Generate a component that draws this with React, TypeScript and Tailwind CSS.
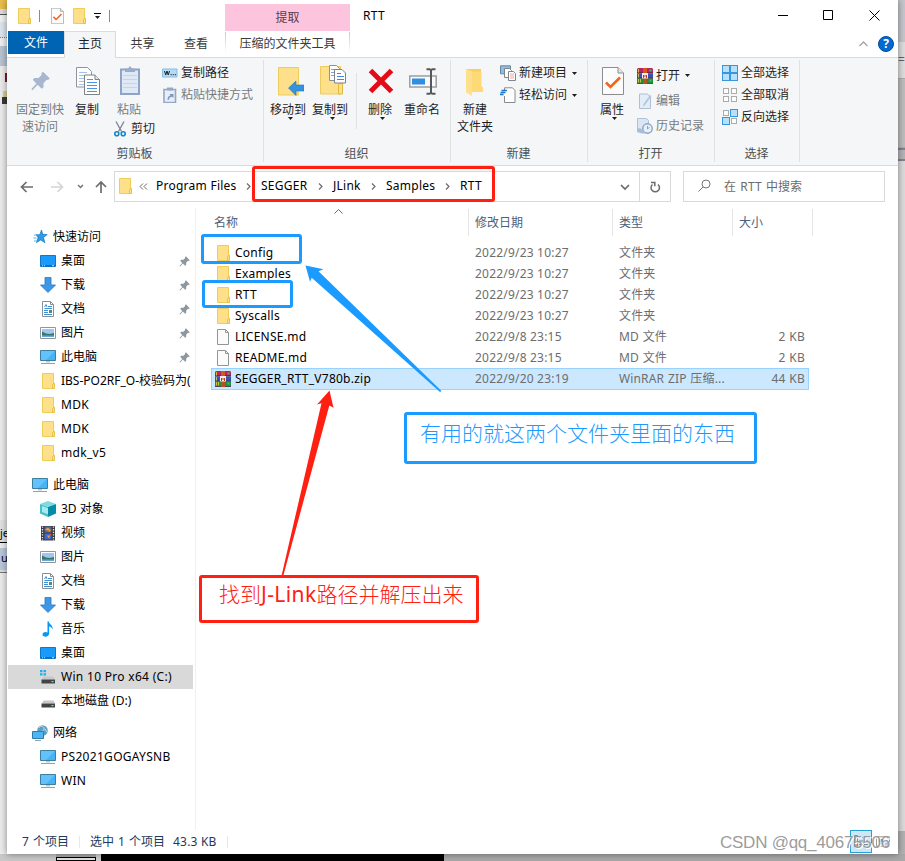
import type { ReactNode } from 'react'

type IconProps = { name: string; className?: string }

// 小图标：资源管理器里用到的各种 16px / 32px 图形
function Icon({ name, className = 'size-4' }: IconProps) {
  switch (name) {
    case 'folder':
      return (
        <svg className={className} viewBox="0 0 16 16">
          <path d="M2.5.5h11v11l.5.5v3.5H2.5z" fill="#ffe08a" stroke="#f0cd58" />
          <path d="M12.5 15.5v-4l2-1.3v5.3z" fill="#ffe08a" stroke="#e3b93b" strokeWidth=".8" />
        </svg>
      )
    case 'file':
      return (
        <svg className={className} viewBox="0 0 16 16">
          <path d="M2.5.5h8l3 3v12h-11z" fill="#fbfbfb" stroke="#949494" />
          <path d="M10.5.5v3h3" fill="none" stroke="#949494" />
        </svg>
      )
    case 'rar':
      return (
        <svg className={className} viewBox="0 0 16 16">
          <path d="M0 1l1-1h14l1 1v4H0z" fill="#b8245f" />
          <path d="M0 5.5h16v4.5H0z" fill="#3551b5" />
          <path d="M0 10.5h16V15H0z" fill="#1e8f3c" />
          <path d="M0 5h16M0 10.2h16M0 15.5h16" stroke="#2b1d2b" strokeWidth=".8" />
          <path d="M1.5 1v3.5M1.5 6v3.5M1.5 11v3.5M3.5 11v3.5" stroke="#ecd34a" strokeWidth=".8" />
          <path d="M6 0h4v5H6z" fill="#d9541d" />
          <path d="M6 10h4v6H6z" fill="#b5521d" />
          <path d="M5 5h6v5.500H5z" fill="#f3efec" />
          <path d="M6.500 10V7M9.500 7v3M8 7v2" fill="none" stroke="#c23a20" strokeWidth="1" />
          <path d="M12.5 1.5h2v2h-2zM12.5 11.5h2v2h-2z" fill="#4dbb57" />
        </svg>
      )
    case 'star':
      return (
        <svg className={className} viewBox="0 0 16 16">
          <path d="M9.5 1l1.2 4.3 4.5.3-3.7 2.8 1.3 5.3-4-2.8-4.3 2.7 1.6-4.9-2-3h3.7z" fill="#2e9be6" stroke="#1676bd" strokeWidth=".7" />
          <path d="M2 6h4M1.5 9h3M2 12h3" stroke="#55b6f0" strokeWidth="1" />
        </svg>
      )
    case 'desktop':
      return (
        <svg className={className} viewBox="0 0 16 16">
          <path d="M.5 2.5h15v11H.5z" fill="#1a9bfc" stroke="#1276c4" />
          <path d="M1 12.2h14v1H1z" fill="#0a5fa8" />
          <path d="M2 12.7h1M4 12.7h1M12 12.7h2" stroke="#fff" strokeWidth=".8" />
        </svg>
      )
    case 'download':
      return (
        <svg className={className} viewBox="0 0 16 16">
          <path d="M5 .5h6V8h4.5L8 15.5.5 8H5z" fill="#3e97e6" stroke="#2a77c2" strokeWidth=".8" />
        </svg>
      )
    case 'doc':
      return (
        <svg className={className} viewBox="0 0 16 16">
          <path d="M2.500.500h8l3 3v12h-11z" fill="#fff" stroke="#8a8f94" />
          <path d="M10.500.500v3h3" fill="none" stroke="#8a8f94" />
          <path d="M4.500 6l1.500-2.500 1 2.500M8 5.500h4M4.500 7.500h7.500M4 9.500h4M4 11.500h4M4 13.500h8" fill="none" stroke="#3f8fd0" />
          <path d="M9 9h3v3H9z" fill="#4b8d85" />
        </svg>
      )
    case 'picture':
      return (
        <svg className={className} viewBox="0 0 16 16">
          <path d="M.5 2.500h15v11H.500z" fill="#fff" stroke="#8f979d" />
          <path d="M2 4h12v8H2z" fill="#9cc9ee" />
          <path d="M2 6.500l4 2 4 .5 4-1V12H2z" fill="#3c7270" />
          <path d="M2 10.500h12V12H2z" fill="#6aa9d6" />
        </svg>
      )
    case 'pc':
      return (
        <svg className={className} viewBox="0 0 16 16">
          <path d="M.5 1.500h15v10H.500z" fill="#46b3f7" stroke="#3d7f9f" />
          <path d="M1 2h14L6 11H1z" fill="#76cbff" opacity=".6" />
          <path d="M6 12h4v1.500H6z" fill="#b9c8d2" />
          <path d="M1 14.500h14" stroke="#8fa5b4" />
        </svg>
      )
    case 'cube':
      return (
        <svg className={className} viewBox="0 0 16 16">
          <path d="M8 0l8 3-8 3-8-3z" fill="#7fdbe3" />
          <path d="M0 3l8 3v10l-8-3.500z" fill="#45c0cc" />
          <path d="M16 3L8 6v10l8-3.500z" fill="#078ca6" />
          <path d="M2 5l6 2.300v6L2 11z" fill="#a6ecee" />
        </svg>
      )
    case 'video':
      return (
        <svg className={className} viewBox="0 0 16 16">
          <path d="M1 1h14v14.500H1z" fill="#3a3a3d" />
          <path d="M2.500 1.500v14M13.500 1.500v14" stroke="#e8e8e8" strokeWidth="1.300" strokeDasharray="1.300 1.300" />
          <path d="M4.500 1.500h7v6h-7z" fill="#4a67b0" />
          <path d="M4.500 8.500h7v6h-7z" fill="#3b6ad0" />
          <path d="M5 4.500l3-2 3 3-2 1.500zM7 10.500h3l-1 3z" fill="#e8a13b" />
          <path d="M5 6h4M9 9.500h2" stroke="#d6482e" />
        </svg>
      )
    case 'music':
      return (
        <svg className={className} viewBox="0 0 16 16">
          <path d="M7.500.5h1.300c.4 3 4.700 4 3.700 8-.6-2-2-2.800-3.400-3V12.500c0 4-6.600 4-6.600 1 0-2.200 2.800-3.200 5-2z" fill="#0a96f5" />
        </svg>
      )
    case 'osdisk':
    case 'disk':
      return (
        <svg className={className} viewBox="0 0 16 16">
          {name === 'osdisk' && <path d="M0 1h2.500v2.300H0zM3.500 1H6v2.300H3.500zM0 4.300h2.500v2.300H0zM3.500 4.300H6v2.300H3.500z" fill="#1ab0ef" />}
          <path d="M3.500 7.500h10l1.500 3H2z" fill="#c6c8ca" />
          <path d="M1.500 10.500H15v4H1.500z" fill="#424548" />
          <path d="M11.500 12h2v1.200h-2z" fill="#5ff07a" />
        </svg>
      )
    case 'network':
      return (
        <svg className={className} viewBox="0 0 16 16">
          <circle cx="10.500" cy="5.500" r="5.300" fill="#5d9fc0" />
          <path d="M7 3c2-3 4-2 5 0s-2 2-1 4M13 4l2 3" fill="none" stroke="#c7e3ee" />
          <path d="M.5 6.500h11v7H.500z" fill="#4cb5f8" stroke="#2f7ca6" />
          <path d="M3 15.500h6" stroke="#8fa5b4" />
        </svg>
      )
    case 'pin':
      return (
        <svg className={className} viewBox="0 0 16 16">
          <path
            d="M10 .5L15.500 6l-1.500 1.200-1-.2-2.600 2.700v3.300l-1.400 1.200-3.300-3.200L1.600 15.300l-.9-.9L4.700 10 1.800 6.900l1.300-1.300h3.300L9 3l-.3-1.200z"
            fill="currentColor"
          />
        </svg>
      )
    case 'checkpage':
      return (
        <svg className={className} viewBox="0 0 22 28">
          <path d="M.5.500h15.500l5.500 5.500v21.500H.5z" fill="#fcfcfc" stroke="#8d8d8d" />
          <path d="M16 .5V6h5.500" fill="#e4e4e4" stroke="#8d8d8d" />
          <path d="M4 15.500l4.500 4.500L18 10.500" fill="none" stroke="#f1641e" strokeWidth="2.600" />
        </svg>
      )
    case 'copy':
      return (
        <svg className={className} viewBox="0 0 24 28">
          <path d="M.5.500h11l4 4V20H.500z" fill="#fdfdfd" stroke="#8e9499" />
          <path d="M3 5.500h8M3 8.500h10M3 11.500h10M3 14.500h10M3 17.500h8" stroke="#9fc3ee" />
          <path d="M8.500 8h10.500l4.500 4.500v15h-15z" fill="#fdfdfd" stroke="#7c8388" />
          <path d="M19 8v4.500h4.500" fill="#e4e4e4" stroke="#7c8388" />
          <path d="M11 12.500h6M11 15.500h10M11 18.500h10M11 21.500h10M11 24.500h10" stroke="#4d92e3" />
        </svg>
      )
    case 'paste':
      return (
        <svg className={className} viewBox="0 0 20 29">
          <path d="M1 3.500h18v24.500H1z" fill="#dfe9f5" stroke="#8fa4c4" strokeWidth="2" />
          <path d="M5 2.500h3L10 0l2 2.500h3V6H5z" fill="#9aacc9" />
          <path d="M3 9.500h14M3 13.500h14M3 17.500h14M3 21.500h14" stroke="#c5d4e8" />
        </svg>
      )
    case 'scissors':
      return (
        <svg className={className} viewBox="0 0 12 16">
          <path d="M2 .5l5.500 10M10 .5l-5.500 10" stroke="#77848e" strokeWidth="1.300" />
          <circle cx="2.800" cy="12.800" r="2" fill="none" stroke="#1585c9" strokeWidth="1.600" />
          <circle cx="9.200" cy="12.800" r="2" fill="none" stroke="#1585c9" strokeWidth="1.600" />
        </svg>
      )
    case 'path':
      return (
        <svg className={className} viewBox="0 0 16 16">
          <path d="M.5 4h14.500v8H.500z" fill="#b5dcf7" stroke="#85bce2" />
          <path d="M2.500 6l1.200 4 1.300-4 1.200 4L7.500 6" fill="none" stroke="#222" />
          <path d="M8.500 9.700h1.200M10.700 9.700h1.200M12.800 9.700H14" stroke="#222" />
        </svg>
      )
    case 'shortcut':
      return (
        <svg className={className} viewBox="0 0 16 16">
          <path d="M2 2.500h11.500v13H2z" fill="#e7eef7" stroke="#93a8c8" strokeWidth="1.600" />
          <path d="M5 .5h6v3H5z" fill="#93a8c8" />
          <path d="M5.500 13c0-3 1-4 3-4.500L7.500 7h4v4l-1.300-1.200C8 10 7 11 6.700 13z" fill="#7f97bd" />
        </svg>
      )
    case 'moveto':
      return (
        <svg className={className} viewBox="0 0 26 30">
          <path d="M.5 1.500h20V29H.500z" fill="#ffe08a" stroke="#edcb5c" />
          <path d="M17 29v-9l4-2v11z" fill="#f9d569" />
          <path d="M10.500 22l7.500-7v4h8v6h-8v4.500z" fill="#3592df" stroke="#2177bd" strokeWidth=".6" />
        </svg>
      )
    case 'copyto':
      return (
        <svg className={className} viewBox="0 0 26 30">
          <path d="M.5 1.500h20V29H.500z" fill="#ffe08a" stroke="#edcb5c" />
          <path d="M18.500 29V19.500l4-2V29z" fill="#ffe08a" stroke="#e0b93f" />
          <path d="M9.500.5h7l3 3v12h-10z" fill="#fdfdfd" stroke="#8d9297" />
          <path d="M11 4.500h5M11 7.500h5M11 10.500h5" stroke="#6fa8e6" />
          <path d="M14.500 4.500h7.500l3.500 3.500v10h-11z" fill="#fdfdfd" stroke="#7d8388" />
          <path d="M17 8.500h4M17 11.500h7M17 14.500h7" stroke="#3f8ae0" />
        </svg>
      )
    case 'delete':
      return (
        <svg className={className} viewBox="0 0 26 26">
          <path d="M2.500 2.500l21 21M23.500 2.500l-21 21" stroke="#e30b17" strokeWidth="5" />
        </svg>
      )
    case 'rename':
      return (
        <svg className={className} viewBox="0 0 28 27">
          <path d="M.8 8h26.400v11H.800z" fill="#fafafa" stroke="#9a9da0" strokeWidth="1.500" />
          <path d="M3 10.500h13v6H3z" fill="#2f8fe3" />
          <path d="M17.500 1.300h3.200l1.300 1 1.300-1h3.200M22 2v23M17.500 25.700h3.200l1.300-1 1.300 1h3.200" fill="none" stroke="#55595c" strokeWidth="2" />
        </svg>
      )
    case 'newfolder':
      return (
        <svg className={className} viewBox="0 0 20 28">
          <path d="M1 1h15v17l2 2v4H6z" fill="#fbcf5f" />
          <path d="M1 1l6 2.500V28l-6-3.500z" fill="#ffe18d" />
          <path d="M7 3.500h9.500v15L18 20v4H7z" fill="#ffd976" />
        </svg>
      )
    case 'newitem':
      return (
        <svg className={className} viewBox="0 0 16 16">
          <path d="M.5.800h10v8H.500z" fill="#86bfe8" stroke="#6c8798" />
          <path d="M4.500 3.500h5l2 2v7h-7z" fill="#fff" stroke="#7e868c" />
          <path d="M8.500 6.500h5l2 2v7h-7z" fill="#fff" stroke="#7e868c" />
          <path d="M10 9h4M10 11h4M10 13h4" stroke="#e39191" strokeWidth=".8" />
        </svg>
      )
    case 'easy':
      return (
        <svg className={className} viewBox="0 0 16 16">
          <path d="M4.500 3V.800h8l2.500 2.700v12H4.500V9" fill="#fff" stroke="#868b90" />
          <path d="M1.500 3.500H7M.5 5.500h5M0 7.500h3.500" stroke="#1b78c9" strokeWidth="1.300" />
        </svg>
      )
    case 'edit':
      return (
        <svg className={className} viewBox="0 0 16 16">
          <path d="M2.500 1h8l3 3v11.500h-11z" fill="#e3edf8" stroke="#aebfd6" />
          <path d="M14.500 3L8 12l-2 1.500.500-2.500 6.500-9z" fill="#b3c5df" />
        </svg>
      )
    case 'history':
      return (
        <svg className={className} viewBox="0 0 16 16">
          <path d="M.5.500h9l2 2V14H.500z" fill="#dbe6f3" stroke="#afc1d9" />
          <circle cx="10.500" cy="10.500" r="4.700" fill="#e9f0f8" stroke="#8ba2c3" strokeWidth="1.400" />
          <path d="M10.500 8v3l2.200-2" fill="none" stroke="#8ba2c3" />
          <path d="M0 10.500c3-1 7 1 8 5-4 .5-8-1-8-5z" fill="#a9bddb" />
        </svg>
      )
    case 'selall':
    case 'selnone':
    case 'selinv': {
      const on = name === 'selall' ? [1, 1, 1, 1] : name === 'selnone' ? [0, 0, 0, 0] : [0, 1, 1, 0]
      return (
        <svg className={className} viewBox="0 0 16 16">
          {on.map((v, i) => {
            const x = (i % 2) * 8
            const y = Math.floor(i / 2) * 8
            return v ? (
              <rect key={i} x={x + 0.5} y={y + 0.5} width="7" height="7" fill="#b9e0fa" stroke="#3796dc" />
            ) : (
              <rect key={i} x={x + 1.5} y={y + 1.5} width="5" height="5" fill="#fdfdfd" stroke="#a9abad" />
            )
          })}
        </svg>
      )
    }
    default:
      return null
  }
}

function DownTri({ className = '' }: { className?: string }) {
  return (
    <svg className={`h-[3px] w-[5px] ${className}`} viewBox="0 0 5 3">
      <path d="M0 0h5L2.500 3z" fill="#1e1e1e" />
    </svg>
  )
}

function BigButton({ icon, size, lines, width, dim, arrow }: { icon: string; size: string; lines: string[]; width: string; dim?: boolean; arrow?: boolean }) {
  return (
    <button className={`flex shrink-0 flex-col items-center ${width} ${dim ? 'text-[#777b80]' : 'text-[#1e1e1e]'}`}>
      <span className="flex h-[34px] items-start justify-center">
        <Icon name={icon} className={size} />
      </span>
      {lines.map((l) => (
        <span key={l} className="h-[17px] leading-[17px] whitespace-nowrap">
          {l}
        </span>
      ))}
      {arrow && <DownTri className="mt-[-1px] ml-[4px]" />}
    </button>
  )
}

function SmallButton({ icon, label, dim, arrow, height = 'h-[22px]' }: { icon: string; label: string; dim?: boolean; arrow?: boolean; height?: string }) {
  return (
    <button className={`flex items-center gap-[3px] whitespace-nowrap ${height} ${dim ? 'text-[#777b80]' : 'text-[#1e1e1e]'}`}>
      <Icon name={icon} className="size-4" />
      <span>{label}</span>
      {arrow && <DownTri className="ml-[2px]" />}
    </button>
  )
}

function Group({ label, width, children }: { label: string; width: string; children: ReactNode }) {
  return (
    <div className={`flex h-full shrink-0 pt-[2px] pb-[3px] ${width}`}>
      <div className="flex min-w-0 flex-1 flex-col">
        <div className="flex flex-1 pt-[7px]">{children}</div>
        <div className="h-[17px] pr-px text-center leading-[17px] text-[#4b4f54]">{label}</div>
      </div>
      <div className="w-px bg-[#dfe1e3]" />
    </div>
  )
}

type NavItem = { icon: string; label: string; pinned?: boolean; selected?: boolean; root?: boolean }

const NAV: NavItem[][] = [
  [
    { icon: 'star', label: '快速访问', root: true },
    { icon: 'desktop', label: '桌面', pinned: true },
    { icon: 'download', label: '下载', pinned: true },
    { icon: 'doc', label: '文档', pinned: true },
    { icon: 'picture', label: '图片', pinned: true },
    { icon: 'pc', label: '此电脑', pinned: true },
    { icon: 'folder', label: 'IBS-PO2RF_O-校验码为(' },
    { icon: 'folder', label: 'MDK' },
    { icon: 'folder', label: 'MDK' },
    { icon: 'folder', label: 'mdk_v5' },
  ],
  [
    { icon: 'pc', label: '此电脑', root: true },
    { icon: 'cube', label: '3D 对象' },
    { icon: 'video', label: '视频' },
    { icon: 'picture', label: '图片' },
    { icon: 'doc', label: '文档' },
    { icon: 'download', label: '下载' },
    { icon: 'music', label: '音乐' },
    { icon: 'desktop', label: '桌面' },
    { icon: 'osdisk', label: 'Win 10 Pro x64 (C:)', selected: true },
    { icon: 'disk', label: '本地磁盘 (D:)' },
  ],
  [
    { icon: 'network', label: '网络', root: true },
    { icon: 'pc', label: 'PS2021GOGAYSNB' },
    { icon: 'pc', label: 'WIN' },
  ],
]

const FILES = [
  { icon: 'folder', name: 'Config', date: '2022/9/23 10:27', type: '文件夹', size: '' },
  { icon: 'folder', name: 'Examples', date: '2022/9/23 10:27', type: '文件夹', size: '' },
  { icon: 'folder', name: 'RTT', date: '2022/9/23 10:27', type: '文件夹', size: '' },
  { icon: 'folder', name: 'Syscalls', date: '2022/9/23 10:27', type: '文件夹', size: '' },
  { icon: 'file', name: 'LICENSE.md', date: '2022/9/8 23:15', type: 'MD 文件', size: '2 KB' },
  { icon: 'file', name: 'README.md', date: '2022/9/8 23:15', type: 'MD 文件', size: '2 KB' },
  { icon: 'rar', name: 'SEGGER_RTT_V780b.zip', date: '2022/9/20 23:19', type: 'WinRAR ZIP 压缩...', size: '44 KB', selected: true },
]

function TitleBar() {
  return (
    <div className="flex h-[31px] shrink-0">
      <div className="flex w-[218px] items-center pl-[9px]">
        <Icon name="folder" />
        <div className="ml-[7px] h-3 w-px bg-[#8c8c8c]" />
        <Icon name="checkpage" className="ml-[11px] h-4 w-[13px]" />
        <Icon name="folder" className="ml-[7px] size-4" />
        <div className="ml-[7px] flex flex-col items-center gap-[2px]">
          <div className="h-px w-[7px] bg-black" />
          <DownTri />
        </div>
        <div className="ml-[8px] h-3 w-px bg-[#8c8c8c]" />
      </div>
      <div className="mt-1 flex h-[27px] w-[125px] items-center justify-center bg-[#fdc4de] text-[#5c3a4a]">提取</div>
      <div className="flex-1 pt-2 pl-[13px] leading-4 tracking-[0.3px] text-black">RTT</div>
      <svg className="mt-[10px] mr-[18px] h-[11px] w-[102px]" viewBox="0 0 102 11" fill="none" stroke="#000">
        <path d="M0 5.500h10" />
        <path d="M45.500.500h9v9h-9z" />
        <path d="M91.500.500l10 10M101.500.500l-10 10" />
      </svg>
    </div>
  )
}

function Tabs() {
  return (
    <div className="flex h-[27px] shrink-0 leading-[23px] text-[#3a3a3a]">
      <div className="w-px border-b border-[#dadbdc]" />
      <div className="w-14 border-b border-[#dadbdc]">
        <div className="h-[23px] bg-[#0064b5] text-center text-white">文件</div>
      </div>
      <div className="w-[52px] border-x border-t border-[#dadbdc] bg-[#f5f6f7] text-center text-[#1e1e1e]">主页</div>
      <div className="w-[53px] border-b border-[#dadbdc] pt-px text-center">共享</div>
      <div className="w-[56px] border-b border-[#dadbdc] pt-px pr-[2px] text-center">查看</div>
      <div className="w-[125px] border-b border-[#dadbdc]">
        <div className="flex h-[22px] justify-between pt-px">
          <div className="w-px bg-linear-to-b from-[#c8c8c8] to-white" />
          <span className="whitespace-nowrap">压缩的文件夹工具</span>
          <div className="w-px bg-linear-to-b from-[#c8c8c8] to-white" />
        </div>
      </div>
      <div className="flex flex-1 items-center justify-end border-b border-[#dadbdc] pr-[4px]">
        <svg className="mr-[10px] h-[6px] w-[9px]" viewBox="0 0 9 6" fill="none" stroke="#a4a4a4" strokeWidth="1.300">
          <path d="M.5 5l4-4 4 4" />
        </svg>
        <div className="flex size-4 items-center justify-center rounded-full border border-[#004b9c] bg-[#0069d2] text-[12px] leading-4 font-bold text-white">?</div>
      </div>
    </div>
  )
}

function Ribbon() {
  return (
    <div className="flex h-[108px] shrink-0 border-b border-[#dadbdc] bg-[#f5f6f7]">
      <Group label="剪贴板" width="w-[257px]">
        <div className="w-px" />
        <div className="flex w-16 flex-col items-center text-[#777b80]">
          <span className="flex h-[34px] items-center text-[#a7b7cf]">
            <Icon name="pin" className="mt-[-6px] h-[20px] w-[21px]" />
          </span>
          <span className="leading-[17px]">固定到快</span>
          <span className="leading-[17px]">速访问</span>
        </div>
        <BigButton icon="copy" size="ml-[2px] h-[28px] w-[24px]" lines={['复制']} width="w-[30px]" />
        <div className="flex w-[60px] flex-col pl-[1px]">
          <BigButton icon="paste" size="ml-[2px] h-[29px] w-[20px] mt-[-1px]" lines={['粘贴']} width="w-[52px]" dim />
          <div className="flex h-[22px] items-center gap-[5px] pl-[11px] text-[#1e1e1e]">
            <Icon name="scissors" className="h-4 w-3" />
            剪切
          </div>
        </div>
        <div className="mt-[-5px]">
          <SmallButton icon="path" label="复制路径" />
          <SmallButton icon="shortcut" label="粘贴快捷方式" dim />
        </div>
      </Group>
      <Group label="组织" width="w-[187px]">
        <BigButton icon="moveto" size="ml-[6px] h-[30px] w-[26px] mt-[-1px]" lines={['移动到']} width="w-[48px]" arrow />
        <BigButton icon="copyto" size="ml-[6px] h-[30px] w-[26px] mt-[-2px]" lines={['复制到']} width="w-[36px]" arrow />
        <div className="mt-[6px] ml-[8px] h-[56px] w-px bg-[#dfe1e3]" />
        <BigButton icon="delete" size="ml-[2px] size-[26px] mt-[1px]" lines={['删除']} width="w-[46px]" arrow />
        <BigButton icon="rename" size="ml-[2px] mt-px h-[27px] w-[28px]" lines={['重命名']} width="w-[38px]" />
      </Group>
      <Group label="新建" width="w-[137px]">
        <BigButton icon="newfolder" size="h-[28px] w-[20px] mt-[1px]" lines={['新建', '文件夹']} width="w-[48px]" />
        <div className="mt-[-5px] ml-[1px]">
          <SmallButton icon="newitem" label="新建项目" arrow />
          <SmallButton icon="easy" label="轻松访问" arrow />
        </div>
      </Group>
      <Group label="打开" width="w-[127px]">
        <BigButton icon="checkpage" size="ml-px h-[28px] w-[22px]" lines={['属性']} width="w-[48px]" arrow />
        <div className="mt-[-4px] ml-[1px]">
          <SmallButton icon="rar" label="打开" arrow height="h-[25px]" />
          <SmallButton icon="edit" label="编辑" dim height="h-[25px]" />
          <SmallButton icon="history" label="历史记录" dim height="h-[25px]" />
        </div>
      </Group>
      <Group label="选择" width="w-[85px]">
        <div className="mt-[-5px] ml-[7px]">
          <SmallButton icon="selall" label="全部选择" />
          <SmallButton icon="selnone" label="全部取消" />
          <SmallButton icon="selinv" label="反向选择" />
        </div>
      </Group>
    </div>
  )
}

function Crumb({ label, width }: { label: string; width: string }) {
  return (
    <div className={`flex shrink-0 items-center justify-between tracking-[0.25px] ${width}`}>
      <span className="mt-[-2px] whitespace-nowrap">{label}</span>
      <svg className="mr-[10px] h-[7px] w-[5px]" viewBox="0 0 5 7" fill="none" stroke="#6b6b6b" strokeWidth="1.200">
        <path d="M1 .5l3 3-3 3" />
      </svg>
    </div>
  )
}

function AddressRow() {
  return (
    <div className="flex h-[42px] shrink-0 pt-[5px]">
      <svg className="ml-[13px] h-[31px] w-[94px]" viewBox="0 0 94 31" fill="none" stroke="#6d6d6d" strokeWidth="1.700">
        <path d="M13 16H2M6.500 11L1.500 16l5 5" />
        <path d="M31 16h11M37.500 11l5 5-5 5" stroke="#d5d5d5" />
        <path d="M58 14l2.500 2.500 2.500-2.500" strokeWidth="1.300" />
        <path d="M81 22V11M76 16l5-5 5 5" />
      </svg>
      <div className="flex h-[31px] w-[557px] border border-[#d9d9d9] text-black">
        <div className="flex flex-1 items-center pl-[2px]">
          <Icon name="folder" className="mt-[-2px] size-4" />
          <svg className="mr-[8px] ml-[6px] h-[7px] w-[9px]" viewBox="0 0 9 7" fill="none" stroke="#6b6b6b">
            <path d="M4 .5l-3 3 3 3M8 .5l-3 3 3 3" />
          </svg>
          <Crumb label="Program Files" width="w-[105px]" />
          <Crumb label="SEGGER" width="w-[72px]" />
          <Crumb label="JLink" width="w-[53px]" />
          <Crumb label="Samples" width="w-[74px]" />
          <span className="mt-[-2px] tracking-[0.25px]">RTT</span>
        </div>
        <svg className="mt-[12px] mr-[9px] h-[7px] w-[10px]" viewBox="0 0 10 7" fill="none" stroke="#6b6b6b" strokeWidth="1.700">
          <path d="M1 1l4 4 4-4" />
        </svg>
        <div className="flex w-[31px] items-center justify-center border-l border-[#d9d9d9]">
          <svg className="size-3" viewBox="0 0 12 12" fill="none" stroke="#6b6b6b" strokeWidth="1.500">
            <path d="M3.500 3.500A4.200 4.200 0 1 0 9 3.500M2 1.500h3.800v3.800" />
          </svg>
        </div>
      </div>
      <div className="ml-3 flex h-[31px] w-[202px] items-center border border-[#d9d9d9] text-[#6b6b6b]">
        <svg className="mt-[-3px] ml-[14px] h-[13px] w-[13px]" viewBox="0 0 13 13" fill="none" stroke="#777">
          <circle cx="8" cy="5" r="4" />
          <path d="M5 8L.500 12.500" />
        </svg>
        <span className="ml-[13px] tracking-[0.1px] [word-spacing:1px]">在 RTT 中搜索</span>
      </div>
    </div>
  )
}

function Sidebar() {
  return (
    <div className="flex w-[189px] shrink-0 flex-col gap-2 border-r border-[#f0f0f0] pt-[17px] text-black">
      {NAV.map((section, s) => (
        <div key={s}>
          {section.map((item, i) => (
            <div
              key={i}
              className={`ml-px flex h-6 w-[185px] items-center pr-[3px] ${item.root ? 'pl-6' : 'pl-8'} ${item.selected ? 'bg-[#d9d9d9]' : ''}`}
            >
              <Icon name={item.icon} className="size-4 shrink-0" />
              <span className={`ml-[5px] flex-1 whitespace-nowrap ${/^[\w (:)]+$/.test(item.label) ? 'tracking-[0.3px]' : ''}`}>{item.label}</span>
              {item.pinned && (
                <span className="text-[#8e979e]">
                  <Icon name="pin" className="size-[11px]" />
                </span>
              )}
            </div>
          ))}
        </div>
      ))}
    </div>
  )
}

function FileList() {
  return (
    <div className="flex-1 pt-px">
      <div className="flex h-[27px] pl-[18px] leading-[27px] text-[#4c607a]">
        <div className="flex w-[255px] border-r border-[#e5e5e5]">
          <span className="w-[120px]">名称</span>
          <svg className="h-[5px] w-[9px]" viewBox="0 0 9 5" fill="none" stroke="#6b6b6b">
            <path d="M.5 4.500l4-4 4 4" />
          </svg>
        </div>
        <div className="w-[144px] border-r border-[#e5e5e5] pl-[6px]">修改日期</div>
        <div className="w-[120px] border-r border-[#e5e5e5] pl-[6px]">类型</div>
        <div className="w-[80px] border-r border-[#e5e5e5] pl-[6px]">大小</div>
      </div>
      <div className="ml-[15px] w-[598px] pt-[6px]">
        {FILES.map((f) => (
          <div
            key={f.name}
            className={`flex items-center pr-[3px] pl-[3px] ${f.selected ? 'h-[22px] border border-[#99d1ff] bg-[#cce8ff]' : 'mx-px h-[21px]'}`}
          >
            <Icon name={f.icon} />
            <span className="ml-1 w-[240px] tracking-[0.25px] text-black">{f.name}</span>
            <span className="w-[144px] tracking-[0.2px] text-[#6d6d6d]">{f.date}</span>
            <span className="w-[120px] tracking-[0.15px] whitespace-nowrap text-[#6d6d6d] [word-spacing:0.5px]">{f.type}</span>
            <span className="flex-1 text-right tracking-[0.2px] text-[#6d6d6d] [word-spacing:0.5px]">{f.size}</span>
          </div>
        ))}
      </div>
    </div>
  )
}

function StatusBar() {
  return (
    <div className="flex h-6 shrink-0 items-center pl-[15px] text-[#1e395b]">
      <span className="w-[57px] [word-spacing:1px]">7 个项目</span>
      <div className="h-3 w-px bg-[#e8e8e8]" />
      <span className="ml-[10px] w-[83px] [word-spacing:1px]">选中 1 个项目</span>
      <span className="w-[54px] tracking-[0.2px]">43.3 KB</span>
      <div className="h-3 w-px bg-[#e8e8e8]" />
      <div className="flex-1" />
      <div className="mb-[2px] flex h-[23px] w-[22px] items-center justify-center border border-[#26a0da] bg-[#cce8f6]">
        <svg className="h-3 w-4" viewBox="0 0 16 12">
          <path d="M1.500.500h3v11h-3z" fill="#fff" stroke="#8c8c8c" />
          <path d="M2 5h2M2 10h2" stroke="#c33" />
          <path d="M6 2.500h4M11 2.500h4M6 6h4M11 6h4M6 9.500h4M11 9.500h4" stroke="#7c8b99" />
        </svg>
      </div>
      <svg className="mt-[-2px] mr-[8px] ml-[4px] h-[11px] w-[14px]" viewBox="0 0 15 11">
        <path d="M.5.500h14v10H.500z" fill="#fff" stroke="#8c8c8c" />
        <path d="M3 3h5v3H3z" fill="#3b7fd0" />
        <path d="M3 6h10v3H3z" fill="#a4c2e8" />
      </svg>
    </div>
  )
}

// 标注层：方框、箭头与说明文字，盖在窗口之上
function Annotations() {
  return (
    <>
      <div className="absolute top-[166px] left-[252px] h-[36px] w-[243px] rounded-[3px] border-[3px] border-[#ff2012]" />
      <div className="absolute top-[234px] left-[201px] h-[30px] w-[101px] rounded-[3px] border-[3px] border-[#1b9bff]" />
      <div className="absolute top-[280px] left-[202px] h-[28px] w-[91px] rounded-[3px] border-[3px] border-[#1b9bff]" />
      <svg className="absolute top-0 left-0 h-[861px] w-[905px]" viewBox="0 0 905 861">
        <path d="M305.500 265.500L323.500 269.300 318.500 271.200 441.500 391 440 392 311.700 277.700 310 281.700z" fill="#1b9bff" />
        <path d="M329.500 390.500L333.500 407.800 329.300 405.500 283.500 575H281.700L321.500 403.200 317 404.500z" fill="#ff2012" />
      </svg>
      <div className="absolute top-[412px] left-[404px] h-[52px] w-[353px] rounded-[3px] border-[3px] border-[#1b9bff] pt-[3px] pl-[13px] text-[21px] leading-[30px] font-light whitespace-nowrap text-[#1b9bff]">
        有用的就这两个文件夹里面的东西
      </div>
      <div className="absolute top-[575px] left-[199px] h-[48px] w-[280px] rounded-[3px] border-[3px] border-[#ff2012] pt-px pl-[17px] text-[21px] leading-[30px] font-light whitespace-nowrap text-[#ff2012]">
        找到<span className="font-normal tracking-[0.4px]">J-Link</span>路径并解压出来
      </div>
      <div className="absolute top-[833px] left-[720px] font-['Liberation_Sans'] text-[17px] leading-5 tracking-[-0.25px] whitespace-nowrap text-[#8f8f8f]/90 [text-shadow:1px_1px_0_#fff]">
        CSDN @qq_40675506
      </div>
    </>
  )
}

// 窗口左右两侧露出的后方窗口
function LeftEdge() {
  return (
    <div className="flex w-[7px] shrink-0 flex-col overflow-hidden bg-[#ececec] text-[11px] text-black">
      <div className="h-[9px] bg-[#e9bd4d]" />
      <div className="h-[5px] bg-[#dcdcdc]" />
      <div className="h-px bg-[#555]" />
      <div className="h-[7px] bg-[#f0f0f0]" />
      <div className="h-[16px] border-b border-dotted border-[#667fa8] bg-[#dde5ef]" />
      <div className="h-[8px] bg-[#eee]" />
      <div className="h-[20px] bg-[#b8c4d2]" />
      <div className="h-[7px]" />
      <div className="ml-[5px] h-[9px] bg-[#7b1c30]" />
      <div className="h-[9px]" />
      <div className="ml-[3px] h-[6px] bg-[#d9cf8f]" />
      <div className="ml-[2px] h-[7px] w-[5px] bg-[#3a3a3a]" />
      <div className="h-[416px] shrink-0" />
      <div className="h-[23px] shrink-0 border-b border-black bg-[#e2e2e2] leading-[26px]">je</div>
      <div className="h-[5px] shrink-0" />
      <div className="h-[22px] shrink-0 bg-[#b9c8da] pl-px leading-[20px]">u</div>
      <div className="h-[3px] shrink-0 border-b border-[#777] bg-[#ddd]" />
    </div>
  )
}

function RightEdge() {
  return (
    <div className="flex w-[7px] shrink-0 flex-col overflow-hidden bg-[#dcdcdc] text-[12px] text-[#5a6675]">
      <div className="h-[42px] shrink-0 bg-[#c6c7cd]" />
      <div className="h-[36px] shrink-0 bg-[#dedede] leading-[36px]">=</div>
      <div className="h-[70px] shrink-0 border-y border-[#adadad] bg-[#bdbdbd]" />
      <div className="h-[13px] shrink-0 border-y-2 border-[#83848c] bg-[#b4b4b8]" />
      <div className="flex-1" />
      <div className="h-[23px] bg-[#b2b2b2]" />
    </div>
  )
}

export default function App() {
  return (
    <div className="relative flex h-[861px] w-[905px] flex-col overflow-hidden bg-[#ababab] font-['Noto_Sans','Noto_Sans_CJK_SC',sans-serif] text-[12px] leading-4">
      <div className="flex h-[854px] shrink-0">
        <LeftEdge />
        <div className="z-10 flex w-[891px] shrink-0 flex-col bg-white shadow-[0_0_7px_rgba(0,0,0,0.45)]">
          <TitleBar />
          <Tabs />
          <Ribbon />
          <AddressRow />
          <div className="flex min-h-0 flex-1">
            <Sidebar />
            <FileList />
          </div>
          <StatusBar />
        </div>
        <RightEdge />
      </div>
      <div className="flex h-[7px]">
        <div className="w-[56px] bg-[#c9c9c9]" />
        <div className="mt-[3px] w-[40px] border border-black bg-[#e4e4e4]" />
        <div className="w-[5px] bg-[#d0d0d0]" />
        <div className="w-[343px] bg-black" />
        <div className="flex-1 bg-[#a9a9a9]" />
      </div>
      <div className="absolute inset-0 z-20">
        <Annotations />
      </div>
    </div>
  )
}
